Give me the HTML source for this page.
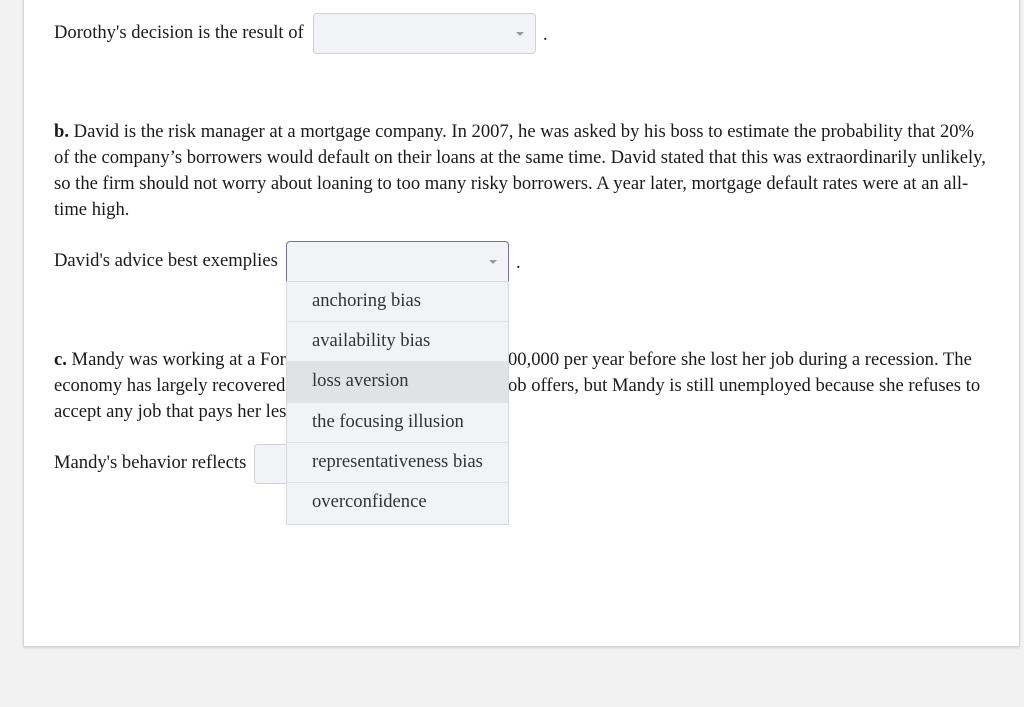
<!DOCTYPE html>
<html><head><meta charset="utf-8"><style>
body{margin:0;width:1024px;height:707px;background:#f2f2f2;font-family:"Liberation Serif",serif;font-size:18.6px;color:#1a1a1a;position:relative;overflow:hidden}
.panel{position:absolute;left:23px;top:-2px;width:995px;height:647px;background:#fff;border:1px solid #d6d6d6;box-shadow:0 1px 2px rgba(0,0,0,.12)}
.t{position:absolute;white-space:nowrap;line-height:26px}
.sel{position:absolute;background:#f2f3f7;border:1px solid #cfd1d6;border-radius:4px;box-sizing:border-box}
.sel .ar{position:absolute;right:11px;top:18px;width:0;height:0;border-left:4px solid transparent;border-right:4px solid transparent;border-top:4px solid #999}
.dd{position:absolute;left:286px;top:281px;width:223px;height:244px;background:#f2f3f7;border:1px solid #d6d7db;box-sizing:border-box}
.dd div{height:40.2px;box-sizing:border-box;line-height:37px;padding-left:25px;border-bottom:1px solid #e2e3e7;color:#333}
.dd div.h{background:#e1e2e6}
</style></head><body>
<div class="panel"></div>
<div class="t" style="left:54px;top:20px">Dorothy's decision is the result of</div>
<div class="sel" style="left:313px;top:13px;width:223px;height:41px"><span class="ar"></span></div>
<div class="t" style="left:543px;top:22px">.</div>

<div class="t" style="left:54px;top:119px;width:935px;white-space:normal"><b>b.</b> David is the risk manager at a mortgage company. In 2007, he was asked by his boss to estimate the probability that 20% of the company’s borrowers would default on their loans at the same time. David stated that this was extraordinarily unlikely, so the firm should not worry about loaning to too many risky borrowers. A year later, mortgage default rates were at an all-time high.</div>

<div class="t" style="left:54px;top:248px">David's advice best exemplies</div>
<div class="sel" style="left:286px;top:241px;width:223px;height:41px;border:1px solid #7a6ea8;border-bottom-color:#cfd1d6;border-radius:4px 4px 0 0"><span class="ar"></span></div>
<div class="t" style="left:516px;top:250px">.</div>

<div class="t" style="left:54px;top:347px"><b>c.</b> Mandy was working at a For</div>
<div class="t" style="left:54px;top:373px">economy has largely recovered</div>
<div class="t" style="left:54px;top:399px">accept any job that pays her les</div>
<div class="t" style="left:508px;top:347px">00,000 per year before she lost her job during a recession. The</div>
<div class="t" style="left:508px;top:373px">ob offers, but Mandy is still unemployed because she refuses to</div>

<div class="t" style="left:54px;top:450px">Mandy's behavior reflects</div>
<div class="sel" style="left:254px;top:444px;width:60px;height:40px"></div>

<div class="dd">
<div>anchoring bias</div>
<div>availability bias</div>
<div class="h">loss aversion</div>
<div>the focusing illusion</div>
<div>representativeness bias</div>
<div style="border-bottom:none">overconfidence</div>
</div>
</body></html>
